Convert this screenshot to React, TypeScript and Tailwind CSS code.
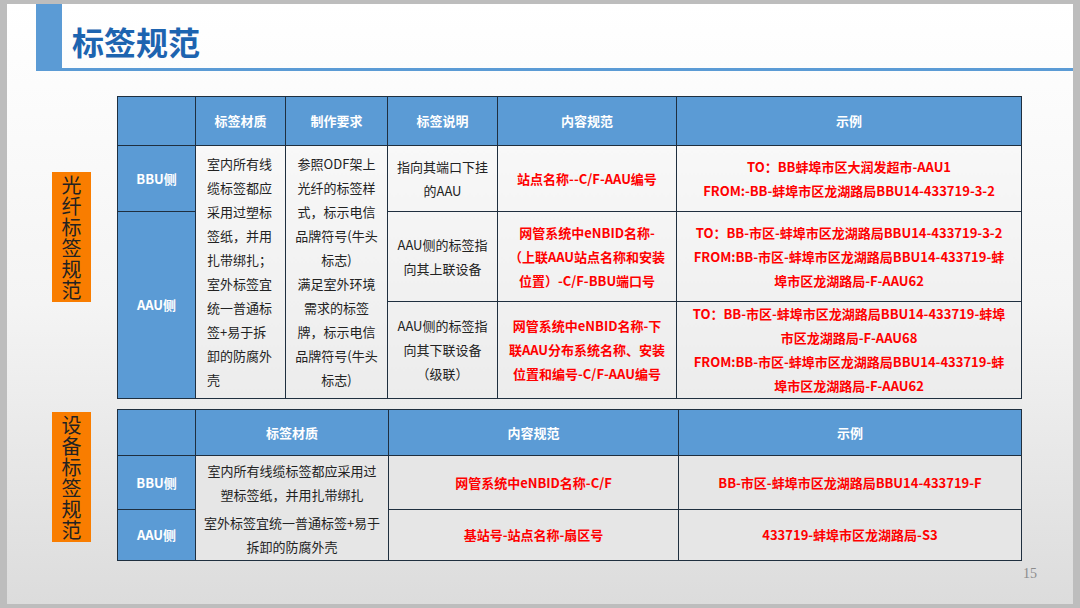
const font = { fontFamily: '"Noto Sans CJK SC", "Liberation Sans", sans-serif' };

const th = "bg-[#5b9bd5] text-white font-bold text-[13px] border border-[#1f2f3f] text-center align-middle";
const td = "border border-[#1f2f3f] text-center align-middle text-[13px] leading-[24px] text-[#222]";
const side = "bg-[#5b9bd5] text-white font-bold text-[13px] border border-[#1f2f3f] text-center align-middle";
const red = "text-[#ff0000] font-bold";

function Tag({ text }: { text: string }) {
  return (
    <div className="w-[39px] h-[130px] bg-[#f97d00] flex flex-col items-center justify-center text-[20px] leading-[21px] text-[#222] overflow-hidden">
      {text.split("").map((c, i) => (
        <span key={i} className="block h-[21px]">{c}</span>
      ))}
    </div>
  );
}

export default function App() {
  return (
    <div className="w-[1080px] h-[608px] bg-[#bdbdbd] pt-[4px] pl-[7px]" style={font}>
      <div className="relative w-[1066px] h-[600px] bg-gradient-to-b from-white via-[#f4f4f4] to-[#dcdcdc]">
        <div className="flex h-[67px] ml-[29px] border-b-[3px] border-[#5b9bd5]">
          <div className="w-[26px] bg-[#5b9bd5]" />
          <div className="pl-[10px] pt-[17px] text-[32px] font-bold text-[#1d64b0] leading-[40px]">标签规范</div>
        </div>

        <div className="flex mt-[25px]">
          <div className="w-[110px] flex justify-start pl-[45px] pt-[76px]">
            <Tag text="光纤标签规范" />
          </div>
          <table className="table-fixed border-collapse w-[904px] bg-gradient-to-b from-[#fafafa] to-[#ececec]">
            <colgroup>
              <col className="w-[78px]" />
              <col className="w-[90px]" />
              <col className="w-[102px]" />
              <col className="w-[110px]" />
              <col className="w-[179px]" />
              <col className="w-[345px]" />
            </colgroup>
            <tbody>
              <tr className="h-[49px]">
                <td className={th}></td>
                <td className={th}>标签材质</td>
                <td className={th}>制作要求</td>
                <td className={th}>标签说明</td>
                <td className={th}>内容规范</td>
                <td className={th}>示例</td>
              </tr>
              <tr className="h-[66px]">
                <td className={side}>BBU侧</td>
                <td className={td} rowSpan={3}>
                  <div className="px-[11px] text-left">室内所有线缆标签都应采用过塑标签纸，并用扎带绑扎；室外标签宜统一普通标签+易于拆卸的防腐外壳</div>
                </td>
                <td className={td} rowSpan={3}>
                  <div className="px-[8px]">参照ODF架上光纤的标签样式，标示电信品牌符号(牛头标志)<br />满足室外环境需求的标签牌，标示电信品牌符号(牛头标志)</div>
                </td>
                <td className={td}>指向其端口下挂<br />的AAU</td>
                <td className={`${td} ${red}`}>站点名称--C/F-AAU编号</td>
                <td className={`${td} ${red}`}>TO：BB蚌埠市区大润发超市-AAU1<br />FROM:-BB-蚌埠市区龙湖路局BBU14-433719-3-2</td>
              </tr>
              <tr className="h-[90px]">
                <td className={side} rowSpan={2}>AAU侧</td>
                <td className={td}>AAU侧的标签指<br />向其上联设备</td>
                <td className={`${td} ${red}`}>网管系统中eNBID名称-<br />（上联AAU站点名称和安装<br />位置）-C/F-BBU端口号</td>
                <td className={`${td} ${red}`}>TO：BB-市区-蚌埠市区龙湖路局BBU14-433719-3-2<br />FROM:BB-市区-蚌埠市区龙湖路局BBU14-433719-蚌<br />埠市区龙湖路局-F-AAU62</td>
              </tr>
              <tr className="h-[97px]">
                <td className={td}>AAU侧的标签指<br />向其下联设备<br />（级联）</td>
                <td className={`${td} ${red}`}>网管系统中eNBID名称-下<br />联AAU分布系统名称、安装<br />位置和编号-C/F-AAU编号</td>
                <td className={`${td} ${red}`}>TO：BB-市区-蚌埠市区龙湖路局BBU14-433719-蚌埠<br />市区龙湖路局-F-AAU68<br />FROM:BB-市区-蚌埠市区龙湖路局BBU14-433719-蚌<br />埠市区龙湖路局-F-AAU62</td>
              </tr>
            </tbody>
          </table>
        </div>

        <div className="flex mt-[10px]">
          <div className="w-[110px] pl-[45px] pt-[3px]">
            <Tag text="设备标签规范" />
          </div>
          <table className="table-fixed border-collapse w-[904px] bg-[#e6e6e6]">
            <colgroup>
              <col className="w-[78px]" />
              <col className="w-[193px]" />
              <col className="w-[290px]" />
              <col className="w-[343px]" />
            </colgroup>
            <tbody>
              <tr className="h-[46px]">
                <td className={th}></td>
                <td className={th}>标签材质</td>
                <td className={th}>内容规范</td>
                <td className={th}>示例</td>
              </tr>
              <tr className="h-[54px]">
                <td className={side}>BBU侧</td>
                <td className={`${td} border-b-0`}>室内所有线缆标签都应采用过<br />塑标签纸，并用扎带绑扎</td>
                <td className={`${td} ${red}`}>网管系统中eNBID名称-C/F</td>
                <td className={`${td} ${red}`}>BB-市区-蚌埠市区龙湖路局BBU14-433719-F</td>
              </tr>
              <tr className="h-[51px]">
                <td className={side}>AAU侧</td>
                <td className={`${td} border-t-0`}>室外标签宜统一普通标签+易于<br />拆卸的防腐外壳</td>
                <td className={`${td} ${red}`}>基站号-站点名称-扇区号</td>
                <td className={`${td} ${red}`}>433719-蚌埠市区龙湖路局-S3</td>
              </tr>
            </tbody>
          </table>
        </div>

        <div className="absolute right-[36px] bottom-[20px] text-[14px] text-[#8c8c8c]" style={{ fontFamily: '"Liberation Serif", serif' }}>15</div>
      </div>
    </div>
  );
}
